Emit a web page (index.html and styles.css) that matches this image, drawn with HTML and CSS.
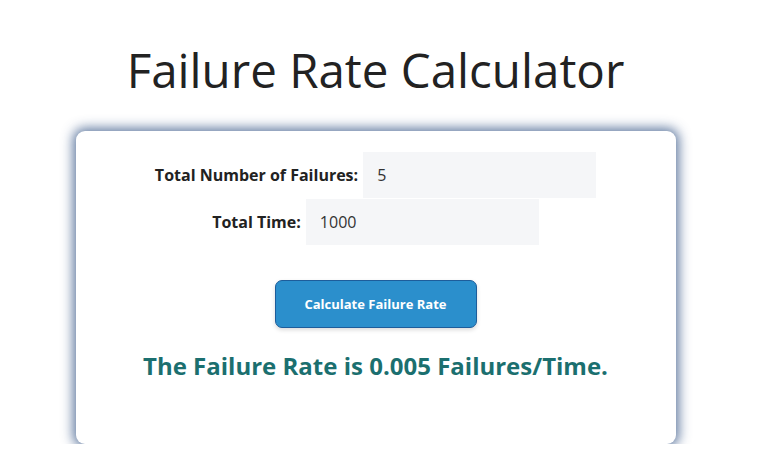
FILE: index.html
```html
<!DOCTYPE html>
<html lang="en">
<head>
    <meta charset="UTF-8">
    <meta name="viewport" content="width=device-width, initial-scale=1.0">
    <title>Failure Rate Calculator</title>
    <link rel="stylesheet" href="styles.css">
</head>
<body>
    <div class="page">
        <h1>Failure Rate Calculator</h1>
        <div class="calculator">
            <div class="field">
                <label for="failures">Total Number of Failures:</label>
                <input type="text" id="failures" value="5">
            </div>
            <div class="field">
                <label for="time">Total Time:</label>
                <input type="text" id="time" value="1000">
            </div>
            <div class="actions">
                <button onclick="calculate()">Calculate Failure Rate</button>
            </div>
            <p id="result" class="result">The Failure Rate is 0.005 Failures/Time.</p>
        </div>
    </div>
    <script>
        function calculate() {
            var f = parseFloat(document.getElementById('failures').value);
            var t = parseFloat(document.getElementById('time').value);
            var res = document.getElementById('result');
            if (isNaN(f) || isNaN(t) || t === 0) {
                res.innerHTML = 'Please enter valid numbers.';
                return;
            }
            res.innerHTML = 'The Failure Rate is ' + (f / t) + ' Failures/Time.';
        }
    </script>
</body>
</html>
```

FILE: styles.css
```css
body {
    margin: 0;
    font-family: "Open Sans", "Noto Sans", Arial, sans-serif;
    background-color: #fff;
    color: #222;
}

.page {
    width: 751px;
    padding-top: 30px;
}

h1 {
    margin: 0 0 21px;
    text-align: center;
    font-size: 47.5px;
    font-weight: 400;
    line-height: 80px;
    color: #222;
}

.calculator {
    width: 600px;
    box-sizing: border-box;
    margin: 0 auto;
    padding: 21px 20px 60px;
    background-color: #fff;
    border-radius: 9px;
    box-shadow: 0 0 12px 3px rgba(70, 100, 145, 0.85);
}

.field {
    display: flex;
    justify-content: center;
    align-items: center;
    gap: 5px;
}

label {
    font-size: 16px;
    font-weight: 700;
    color: #222;
}

input {
    width: 233px;
    height: 46px;
    box-sizing: border-box;
    padding: 0 14px;
    border: none;
    outline: none;
    background-color: #f5f6f8;
    font-family: inherit;
    font-size: 16px;
    color: #333;
}

.field + .field {
    margin-top: 1px;
}

.actions {
    text-align: center;
    margin-top: 35px;
}

button {
    width: 202px;
    height: 48px;
    border: 1px solid #1d5d9b;
    border-radius: 7px;
    background-color: #2b8fcc;
    color: #fff;
    font-family: inherit;
    font-size: 13px;
    font-weight: 700;
    cursor: pointer;
    box-shadow: 0 2px 4px rgba(0, 0, 0, 0.15);
}

button:hover {
    background-color: #2580b8;
}

.result {
    margin: 20px 0 0;
    text-align: center;
    font-size: 24px;
    font-weight: 700;
    line-height: 36px;
    color: #1b6f6f;
}
```
